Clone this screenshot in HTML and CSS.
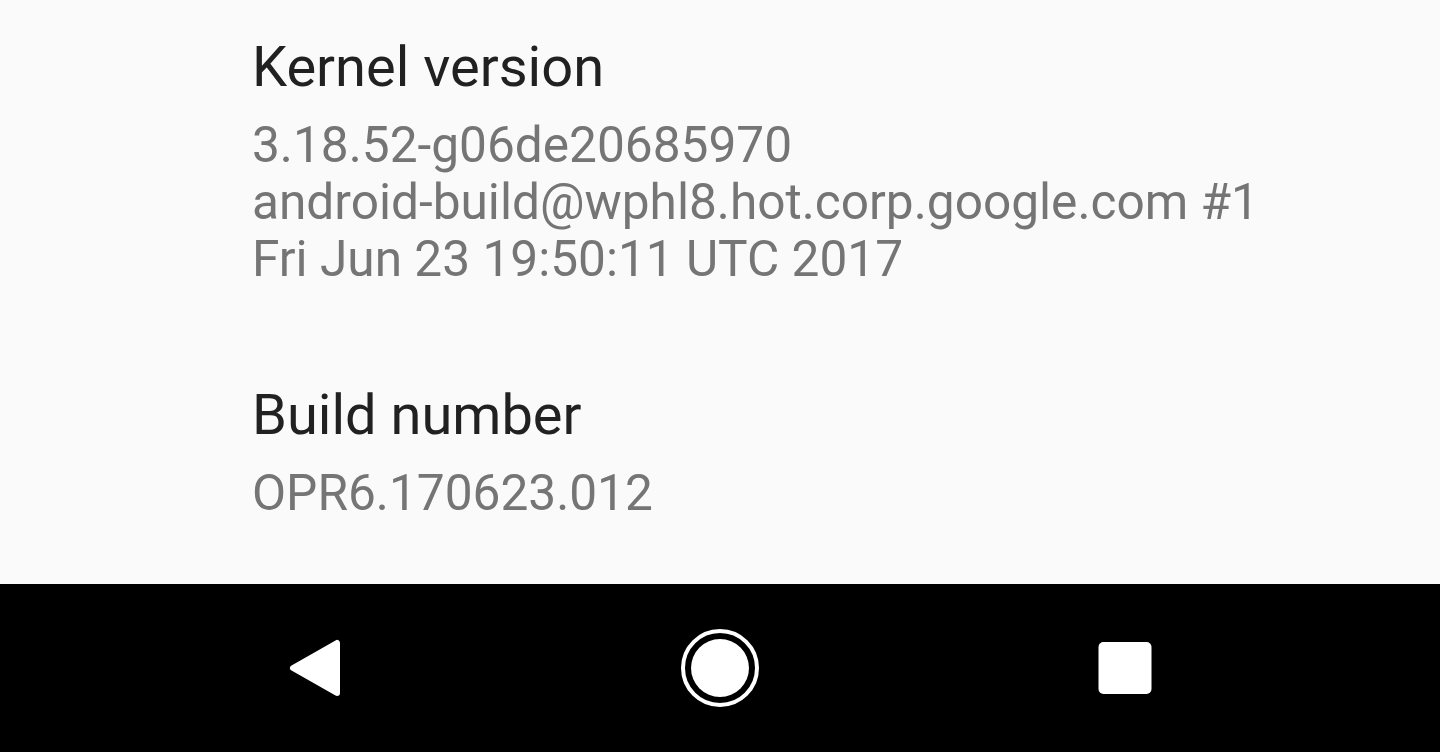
FILE: index.html
```html
<!DOCTYPE html>
<html>
<head>
<meta charset="utf-8">
<link rel="stylesheet" href="styles.css">
</head>
<body>
<div class="screen">
  <main class="content">
    <section class="pref">
      <div class="pref-title">Kernel version</div>
      <div class="pref-summary">3.18.52-g06de20685970<br>android-build@wphl8.hot.corp.google.com #1<br>Fri Jun 23 19:50:11 UTC 2017</div>
    </section>
    <section class="pref">
      <div class="pref-title">Build number</div>
      <div class="pref-summary">OPR6.170623.012</div>
    </section>
  </main>
  <nav class="navbar">
    <div class="nav-btn">
      <svg width="80" height="80" viewBox="0 0 80 80"><polygon points="18,40 62,15 62,65" fill="#fff" stroke="#fff" stroke-width="6" stroke-linejoin="round"/></svg>
    </div>
    <div class="nav-btn">
      <svg width="80" height="80" viewBox="0 0 80 80"><circle cx="40" cy="40" r="37" fill="none" stroke="#fff" stroke-width="4"/><circle cx="40" cy="40" r="29" fill="#fff"/></svg>
    </div>
    <div class="nav-btn">
      <svg width="80" height="80" viewBox="0 0 80 80"><rect x="13.5" y="14" width="53" height="52" rx="5" fill="#fff"/></svg>
    </div>
  </nav>
</div>
</body>
</html>
```

FILE: styles.css
```css
html, body {
  margin: 0;
  padding: 0;
  background: #fafafa;
}
.screen {
  width: 1440px;
  height: 752px;
  display: flex;
  flex-direction: column;
  overflow: hidden;
  font-family: Roboto, "Noto Sans", sans-serif;
}
.content {
  height: 584px;
  box-sizing: border-box;
  padding: 34px 0 0 252px;
  background: #fafafa;
  display: flex;
  flex-direction: column;
  gap: 94px;
}
.pref-title {
  font-size: 56px;
  line-height: 66px;
  color: #212121;
}
.pref-summary {
  margin-top: 17px;
  font-size: 49.6px;
  line-height: 57px;
  color: #757575;
}
.navbar {
  height: 168px;
  background: #000;
  display: flex;
  justify-content: center;
  align-items: center;
  gap: 325px;
}
.nav-btn {
  width: 80px;
  height: 80px;
  display: flex;
}
```
